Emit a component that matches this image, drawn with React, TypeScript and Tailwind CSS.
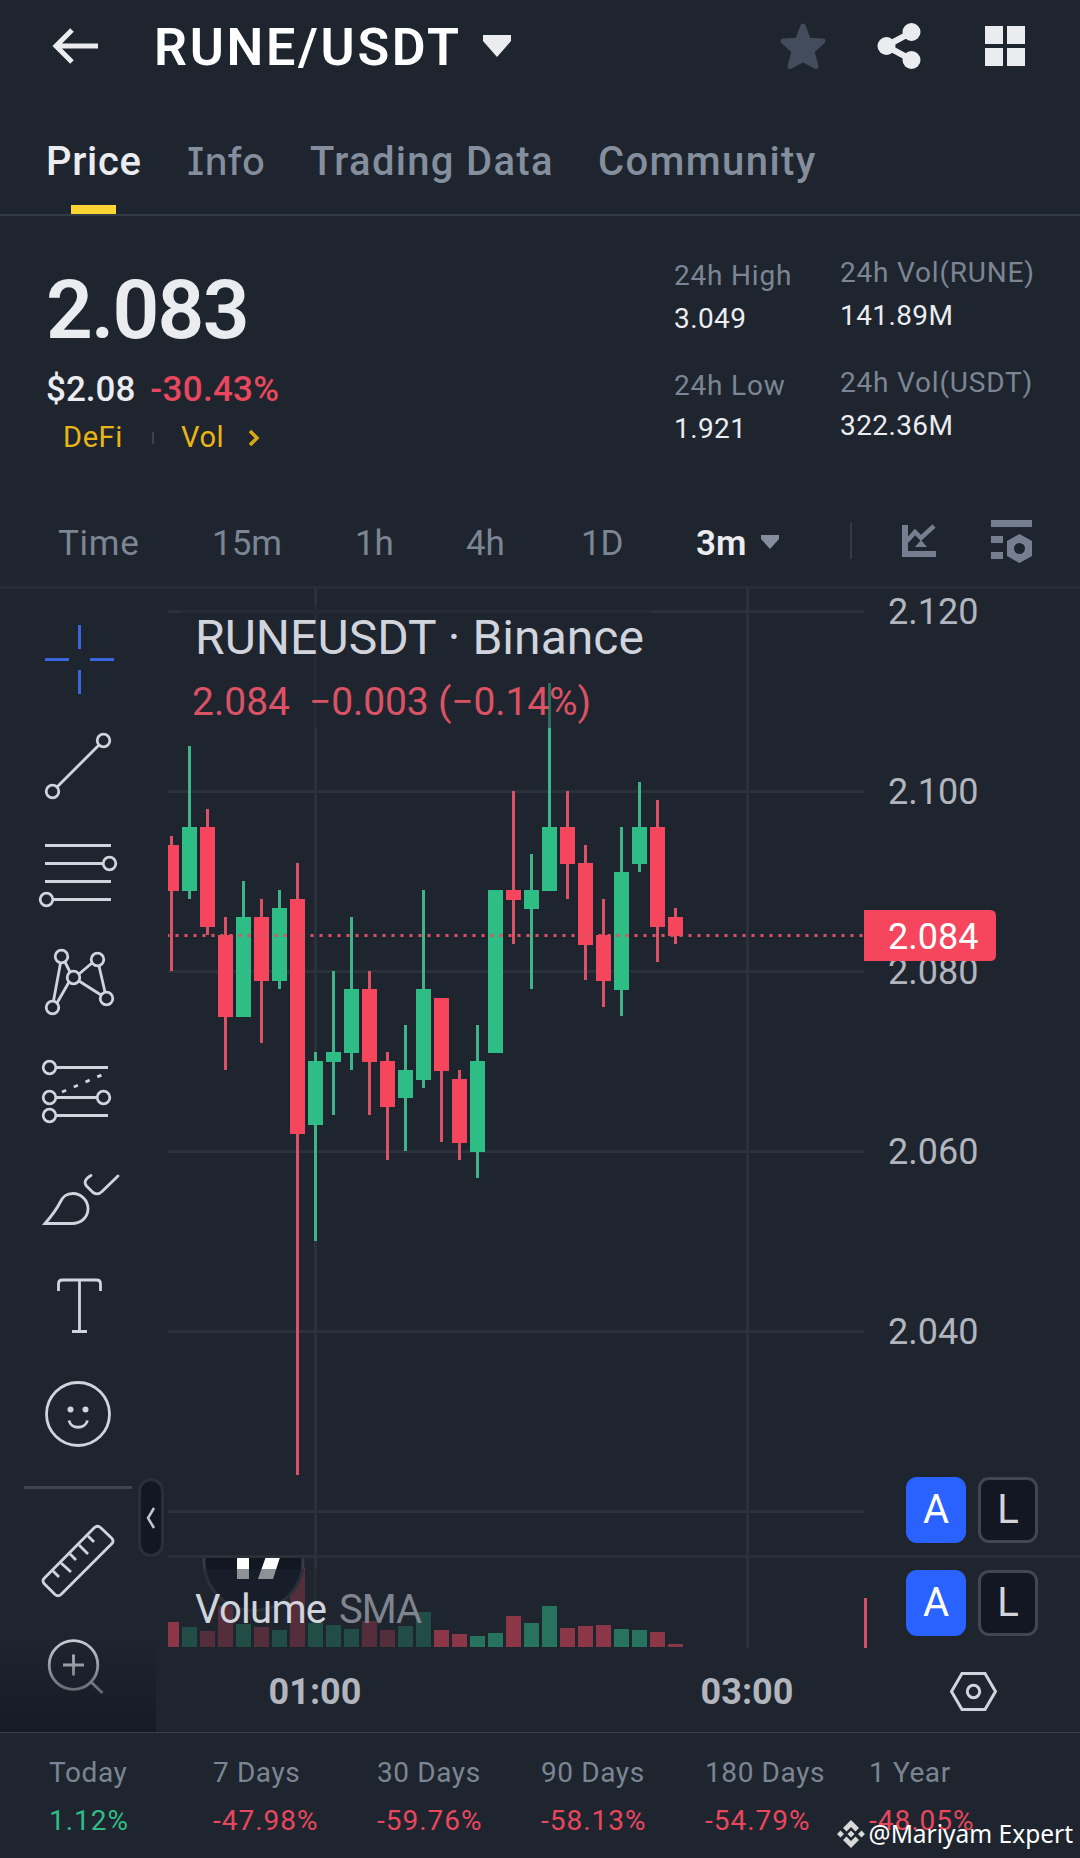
import type { ReactNode } from 'react'

type Candle = {
  up: boolean
  high: number
  top: number
  bottom: number
  low: number
  volume: number
}

// high / top / bottom / low are thousandths above 2.000
const candles: Candle[] = [
  { up: false, high: 95, top: 94, bottom: 89, low: 80, volume: 25 },
  { up: true, high: 105, top: 96, bottom: 89, low: 88, volume: 20 },
  { up: false, high: 98, top: 96, bottom: 85, low: 84, volume: 16 },
  { up: false, high: 86, top: 84, bottom: 75, low: 69, volume: 41 },
  { up: true, high: 90, top: 86, bottom: 75, low: 75, volume: 23 },
  { up: false, high: 88, top: 86, bottom: 79, low: 72, volume: 20 },
  { up: true, high: 89, top: 87, bottom: 79, low: 78, volume: 17 },
  { up: false, high: 92, top: 88, bottom: 62, low: 24, volume: 79 },
  { up: true, high: 71, top: 70, bottom: 63, low: 50, volume: 24 },
  { up: true, high: 80, top: 71, bottom: 70, low: 64, volume: 22 },
  { up: true, high: 86, top: 78, bottom: 71, low: 69, volume: 18 },
  { up: false, high: 80, top: 78, bottom: 70, low: 64, volume: 26 },
  { up: false, high: 71, top: 70, bottom: 65, low: 59, volume: 17 },
  { up: true, high: 74, top: 69, bottom: 66, low: 60, volume: 21 },
  { up: true, high: 89, top: 78, bottom: 68, low: 67, volume: 35 },
  { up: false, high: 77, top: 77, bottom: 69, low: 61, volume: 17 },
  { up: false, high: 69, top: 68, bottom: 61, low: 59, volume: 13 },
  { up: true, high: 74, top: 70, bottom: 60, low: 57, volume: 11 },
  { up: true, high: 89, top: 89, bottom: 71, low: 71, volume: 14 },
  { up: false, high: 100, top: 89, bottom: 88, low: 83, volume: 31 },
  { up: true, high: 93, top: 89, bottom: 87, low: 78, volume: 24 },
  { up: true, high: 112, top: 96, bottom: 89, low: 89, volume: 41 },
  { up: false, high: 100, top: 96, bottom: 92, low: 88, volume: 19 },
  { up: false, high: 94, top: 92, bottom: 83, low: 79, volume: 21 },
  { up: false, high: 88, top: 84, bottom: 79, low: 76, volume: 22 },
  { up: true, high: 96, top: 91, bottom: 78, low: 75, volume: 18 },
  { up: true, high: 101, top: 96, bottom: 92, low: 91, volume: 17 },
  { up: false, high: 99, top: 96, bottom: 85, low: 81, volume: 15 },
  { up: false, high: 87, top: 86, bottom: 84, low: 83, volume: 3 },
]

const intervals = [
  { label: 'Time', width: 'w-[154px]', tracking: 'tracking-[0.7px]' },
  { label: '15m', width: 'w-[143px]', tracking: 'tracking-[0px]' },
  { label: '1h', width: 'w-[111px]', tracking: 'tracking-[-0.2px]' },
  { label: '4h', width: 'w-[115px]', tracking: 'tracking-[-0.2px]' },
  { label: '1D', width: 'w-[115px]', tracking: 'tracking-[-0.2px]' },
]

const performance = [
  { label: 'Today', value: '1.12%', color: 'text-[#2ebd85]' },
  { label: '7 Days', value: '-47.98%', color: 'text-[#e8475e]' },
  { label: '30 Days', value: '-59.76%', color: 'text-[#e8475e]' },
  { label: '90 Days', value: '-58.13%', color: 'text-[#e8475e]' },
  { label: '180 Days', value: '-54.79%', color: 'text-[#e8475e]' },
  { label: '1 Year', value: '-48.05%', color: 'text-[#e8475e]' },
]

function Header() {
  return (
    <header className="flex h-[92px] items-center pl-[52px] pr-[55px]">
      <svg className="h-10 w-12 shrink-0" viewBox="0 0 48 40" fill="none" stroke="#eaecef" strokeWidth="5">
        <path d="M3 20h43M20 4 4 20l16 16" />
      </svg>
      <h1 className="ml-[54px] mt-1 whitespace-nowrap text-[52px] font-semibold leading-none tracking-[2.7px] text-white">
        RUNE/USDT
      </h1>
      <svg className="ml-[19px] h-6 w-8 shrink-0" viewBox="0 0 32 24" fill="#eaecef">
        <path d="M2 1h28v6L16 23 2 7z" />
      </svg>
      <div className="ml-auto flex items-center">
        <svg className="h-12 w-12" viewBox="0 0 48 48" fill="#434c5a" stroke="#434c5a" strokeWidth="5" strokeLinejoin="round">
          <path d="m24 4 5.5 14.2 14.5.9-11 10 4 15.400L24 37.500 11 44.500l4-15.400-11-10 14.500-.9z" />
        </svg>
        <svg className="ml-[47px] h-12 w-12" viewBox="0 0 48 48" fill="#eaecef">
          <path d="M12 24 38 10M12 24 38 38" stroke="#eaecef" strokeWidth="6" />
          <circle cx="12.500" cy="24" r="9" />
          <circle cx="37.500" cy="10" r="9" />
          <circle cx="37.500" cy="38" r="9" />
        </svg>
        <svg className="ml-[63px] h-10 w-10" viewBox="0 0 40 40" fill="#eaecef">
          <path d="M0 0h18v18H0zM22 0h18v18H22zM0 22h18v18H0zM22 22h18v18H22z" />
        </svg>
      </div>
    </header>
  )
}

function Tabs() {
  return (
    <nav className="flex h-[124px] border-b-2 border-[#333b46] pl-[46px] pt-[45px] text-[40px] font-medium leading-[50px] text-[#848e9c]">
      <div className="relative w-[141px] tracking-[0.7px] text-[#eaecef]">
        Price
        <span className="absolute left-[25px] top-[68px] h-[9px] w-[45px] bg-[#fcd535]" />
      </div>
      <div className="-mt-px w-[123px] font-[Inter] text-[38px] tracking-[0.5px] [font-feature-settings:'cv08']">
        Info
      </div>
      <div className="w-[288px] tracking-[1.3px]">Trading Data</div>
      <div className="tracking-[1.4px]">Community</div>
    </nav>
  )
}

function Stat({ label, value }: { label: string; value: string }) {
  return (
    <div className="flex h-[110px] flex-col gap-[11px] whitespace-nowrap text-[28px] leading-8">
      <span className="tracking-[0.8px] text-[#7c8593]">{label}</span>
      <span className="tracking-[0.4px] text-[#eaecef]">{value}</span>
    </div>
  )
}

function Summary() {
  return (
    <section className="flex h-[278px] justify-between pl-[46px]">
      <div className="pt-[47px]">
        <p className="text-[82px] font-semibold leading-[94px] tracking-[-1.8px] text-[#eaecef]">2.083</p>
        <p className="mt-[13px] flex gap-[15px] text-[35px] font-medium leading-10">
          <span className="text-[#eaecef]">$2.08</span>
          <span className="tracking-[0.3px] text-[#e8475e]">-30.43%</span>
        </p>
        <div className="mt-[10px] flex h-9 items-center pl-[17px] text-[29px] tracking-[0.6px] text-[#e9b516]">
          <span className="w-[89px]">DeFi</span>
          <span className="mr-[27px] h-3 w-[2px] bg-[#3a424e]" />
          <span className="w-[67px]">Vol</span>
          <svg className="h-[18px] w-3" viewBox="0 0 12 18" fill="none" stroke="#d9a915" strokeWidth="3.500">
            <path d="m2 2 7 7-7 7" />
          </svg>
        </div>
      </div>
      <div className="flex">
        <div className="w-[166px] pt-[44px]">
          <Stat label="24h High" value="3.049" />
          <Stat label="24h Low" value="1.921" />
        </div>
        <div className="w-[240px] pt-[41px]">
          <Stat label="24h Vol(RUNE)" value="141.89M" />
          <Stat label="24h Vol(USDT)" value="322.36M" />
        </div>
      </div>
    </section>
  )
}

function IntervalBar() {
  return (
    <section className="flex h-[95px] items-center border-b-[3px] border-[#262d37] pl-[58px] pt-[2px] text-[35px] text-[#7c8593]">
      {intervals.map((item) => (
        <span key={item.label} className={`pt-[7px] ${item.width} ${item.tracking}`}>
          {item.label}
        </span>
      ))}
      <span className="w-[64px] pt-[7px] font-semibold text-[#eaecef]">3m</span>
      <svg className="h-[15px] w-[20px]" viewBox="0 0 20 15" fill="#848e9c">
        <path d="M1 1h18v4l-9 10-9-10z" />
      </svg>
      <span className="ml-[70px] h-9 w-[2px] bg-[#343c48]" />
      <svg className="ml-[49px] h-9 w-9" viewBox="0 0 36 36" fill="none" stroke="#767f90">
        <path d="M4 2v29h31" strokeWidth="6" />
        <path d="m6 18 8-9 6 6L33 3" strokeWidth="4.500" />
        <path d="m20 17 6 7H14z" fill="#767f90" stroke="none" />
      </svg>
      <svg className="ml-[54px] h-[44px] w-[42px]" viewBox="0 0 42 44" fill="#767f90">
        <path d="M0 1h41v7H0zM0 17h12v7H0zM0 33h12v7H0z" />
        <path fillRule="evenodd" d="m28.500 15 12.500 7v15l-12.500 7L16 37V22zM28.500 24a5.500 5.500 0 1 0 0 11 5.500 5.500 0 0 0 0-11z" />
      </svg>
    </section>
  )
}

function Tool({ children }: { children: ReactNode }) {
  return (
    <svg
      className="h-[108px] w-[156px] shrink-0"
      viewBox="0 0 156 108"
      fill="none"
      stroke="#d1d4dc"
      strokeWidth="2.800"
    >
      {children}
    </svg>
  )
}

function Toolbar() {
  return (
    <aside className="relative flex h-full w-[156px] shrink-0 flex-col pt-4">
      <Tool>
        <path stroke="#3a66dc" strokeWidth="3" d="M79.500 21v24M79.500 66v24M45 55.500h24M90 55.500h24" />
      </Tool>
      <Tool>
        <circle cx="103.500" cy="28.500" r="6.300" />
        <circle cx="52.500" cy="79.500" r="6.300" />
        <path d="M57 75 99 33" />
      </Tool>
      <Tool>
        <path d="M45 25.500h66M45 43.500h58M45 61.500h66M53 79.500h58" />
        <circle cx="109.500" cy="43.500" r="6.300" />
        <circle cx="46.500" cy="79.500" r="6.300" />
      </Tool>
      <Tool>
        <circle cx="61.500" cy="28.500" r="6.300" />
        <circle cx="97.500" cy="31.500" r="6.300" />
        <circle cx="73.500" cy="49.500" r="6.300" />
        <circle cx="106.500" cy="70.500" r="6.300" />
        <circle cx="52.500" cy="79.500" r="6.300" />
        <path d="m60.500 35-7 38M65 34l5 10M79 46l13-11M99 38l6 26M79 53l22 14M69 54 57 75" />
      </Tool>
      <Tool>
        <circle cx="49.500" cy="31.500" r="6.300" />
        <circle cx="49.500" cy="61.500" r="6.300" />
        <circle cx="103.500" cy="61.500" r="6.300" />
        <circle cx="49.500" cy="79.500" r="6.300" />
        <path d="M56 31.500h52M56 61.500h41M56 79.500h52" />
        <path strokeDasharray="4.500 8.300" d="m62 56 42-18" />
      </Tool>
      <Tool>
        <path d="M45 79.500h27c9 0 16-6 16-15 0-8-7-15-15-15-7 0-10 3-13 9-4 8-8 13-15 21z" />
        <path strokeLinecap="round" d="M91 31.500c-7 4-7 8-4 11l6 6c3 2 6 2 9-1l16-15.500" />
      </Tool>
      <Tool>
        <path d="M58.500 39v-7q0-4 4-4h34q4 0 4 4v7M79.500 28v51M72 79.500h15" />
      </Tool>
      <Tool>
        <circle cx="78" cy="54" r="31.500" />
        <path d="M69 60.500c2 9 16 9 18.500 0" />
        <circle cx="70.500" cy="49.500" r="3" fill="#d1d4dc" stroke="none" />
        <circle cx="85.500" cy="49.500" r="3" fill="#d1d4dc" stroke="none" />
      </Tool>
      <span className="ml-[24px] mt-[18px] h-[3px] w-[108px] shrink-0 bg-[#3f444e]" />
      <svg className="mt-[20px] h-[108px] w-[156px] shrink-0" viewBox="0 0 156 108" fill="none" stroke="#d1d4dc" strokeWidth="2.800">
        <path strokeLinejoin="round" d="M94.500 18.500q3-2.500 6 0l11.500 11q2 3 0 5L61 85.500q-3 2.500-6 0l-11-11q-2-3 0-5z" />
        <path d="m53 62 6 6M61 54l10 9M70 45l6 6M79 36l9 9M88 27l6 6" />
      </svg>
      <Tool>
        <circle cx="73.500" cy="48" r="24.300" />
        <path d="M63 48h21M73.500 37.500v21M91 65l11.500 11" />
      </Tool>
      <div className="absolute bottom-0 left-0 h-[96px] w-[156px] bg-linear-to-b from-transparent to-[#161a24]" />
      <div className="absolute left-[138px] top-[890px] z-10 flex h-[79px] w-[26px] items-center justify-center rounded-[13px] border-[3px] border-[#2a303b] bg-[#131722]">
        <svg className="h-6 w-3" viewBox="0 0 12 24" fill="none" stroke="#c3c6ce" strokeWidth="2.500">
          <path d="M9 2 3 12l6 10" />
        </svg>
      </div>
    </aside>
  )
}

function ScaleButtons({ className }: { className: string }) {
  return (
    <div className={`absolute left-[750px] flex gap-3 text-[40px] leading-none ${className}`}>
      <button className="h-[66px] w-[60px] rounded-[11px] bg-[#2962ff] text-white">A</button>
      <button className="h-[66px] w-[60px] rounded-[11px] border-[3px] border-[#434651] bg-[#131722] text-[#d1d4dc]">
        L
      </button>
    </div>
  )
}

const priceY = (p: number) => 203.5 + (100 - p) * 9
const candleX = (i: number) => 15.5 + i * 18

function Chart() {
  return (
    <div className="relative h-full w-[924px]">
      <svg className="h-[1143px] w-[924px] font-[Roboto]" viewBox="0 0 924 1143">
        <defs>
          <clipPath id="plot">
            <path d="M12 0h696v1143H12z" />
          </clipPath>
          <clipPath id="pane">
            <path d="M12 970h696v100H12z" />
          </clipPath>
        </defs>

        <g fill="#2a313b">
          {[120, 100, 80, 60, 40, 20].map((p) => (
            <rect key={p} x="12" y={priceY(p) - 1.5} width="696" height="3" />
          ))}
          <rect x="158" y="0" width="3" height="1060" />
          <rect x="590" y="0" width="3" height="1060" />
          <rect x="12" y="967" width="912" height="3" fill="#29303a" />
        </g>

        <g clipPath="url(#plot)">
          {candles.map((c, i) => (
            <g key={i}>
              <rect
                x={candleX(i) - 1.5}
                y={priceY(c.high) - 0.5}
                width="3"
                height={(c.high - c.low) * 9}
                fill={c.up ? '#3db489' : '#dc5265'}
              />
              <rect
                x={candleX(i) - 7.5}
                y={priceY(c.top) - 0.5}
                width="15"
                height={(c.top - c.bottom) * 9 + 1}
                fill={c.up ? '#2ebd85' : '#f6465d'}
              />
              <rect
                x={candleX(i) - 7.5}
                y={1059 - c.volume}
                width="15"
                height={c.volume}
                fill={c.up ? '#27735d' : '#8b3747'}
              />
            </g>
          ))}
          <path d="M12 347.500h696" stroke="#dc5265" strokeWidth="3" strokeDasharray="3 6" strokeDashoffset="1.500" />
        </g>

        <g clipPath="url(#pane)">
          <circle cx="97.500" cy="973" r="49.500" fill="#131722" stroke="#363a45" strokeWidth="3" />
          <path d="M81 960h12v31H81zM113 960h14l-10 31h-15z" fill="#fff" />
        </g>
        <rect x="708" y="1010" width="3" height="50" fill="#d55264" />

        <rect x="24" y="18" width="470" height="122" fill="#1e252f" fillOpacity="0.5" />
        <rect x="24" y="981" width="252" height="80" fill="#1e252f" fillOpacity="0.5" />

        <text x="39" y="66" fontSize="48" fill="#d1d4dc" textLength="449">RUNEUSDT · Binance</text>
        <g fontSize="39" fill="#dc5265">
          <text x="36" y="127" textLength="98">2.084</text>
          <text x="153" y="127" textLength="282">−0.003 (−0.14%)</text>
        </g>
        <text x="39" y="1035" fontSize="40" fill="#d1d4dc" textLength="132">Volume</text>
        <text x="183" y="1035" fontSize="40" fill="#80848e" textLength="83">SMA</text>

        <g fontSize="36" fill="#b2b5be">
          <text x="732" y="36">2.120</text>
          <text x="732" y="216">2.100</text>
          <text x="732" y="396">2.080</text>
          <text x="732" y="576">2.060</text>
          <text x="732" y="756">2.040</text>
        </g>
        <path d="M708 322h126q6 0 6 6v39q0 6-6 6H708z" fill="#f6465d" />
        <text x="732" y="361" fontSize="36" fill="#fff">2.084</text>

        <g fontSize="36" fontWeight="700" fill="#b2b5be" textAnchor="middle">
          <text x="159" y="1116">01:00</text>
          <text x="591" y="1116">03:00</text>
        </g>
        <g fill="none" stroke="#d1d4dc" strokeWidth="3">
          <path d="M806 1085.500h23l10.500 18-10.500 18h-23l-10.500-18z" />
          <circle cx="817.500" cy="1103.500" r="6.200" />
        </g>
      </svg>
      <ScaleButtons className="top-[889px]" />
      <ScaleButtons className="top-[982px]" />
    </div>
  )
}

function Performance() {
  return (
    <footer className="relative flex h-[126px] border-t border-[#3a424d] pl-[49px] pt-[22px] text-[28px] leading-9">
      {performance.map((item) => (
        <div key={item.label} className="flex w-[164px] flex-col gap-3 whitespace-nowrap">
          <span className="tracking-[0.6px] text-[#7c8593]">{item.label}</span>
          <span className={`tracking-[1px] ${item.color}`}>{item.value}</span>
        </div>
      ))}
      <div className="absolute bottom-[6px] right-[7px] flex items-center gap-[4px] whitespace-nowrap font-['Noto_Sans'] text-[24.500px] text-white">
        <svg className="h-7 w-7" viewBox="0 0 28 28" fill="#d8d8d8">
          <path d="m14 0 8 8-3.500 3.500L14 7l-4.500 4.500L6 8zM14 28l8-8-3.500-3.500L14 21l-4.500-4.500L6 20zM14 10.500l3.500 3.500-3.500 3.500-3.500-3.500zM3.500 10.500 7 14l-3.500 3.500L0 14zM24.500 10.500 28 14l-3.500 3.500L21 14z" />
        </svg>
        @Mariyam Expert
      </div>
    </footer>
  )
}

export default function App() {
  return (
    <main className="flex h-[1858px] w-[1080px] flex-col overflow-hidden bg-[#1e252f] font-[Roboto]">
      <Header />
      <Tabs />
      <Summary />
      <IntervalBar />
      <section className="-mt-px flex h-[1144px] shrink-0">
        <Toolbar />
        <Chart />
      </section>
      <Performance />
    </main>
  )
}
